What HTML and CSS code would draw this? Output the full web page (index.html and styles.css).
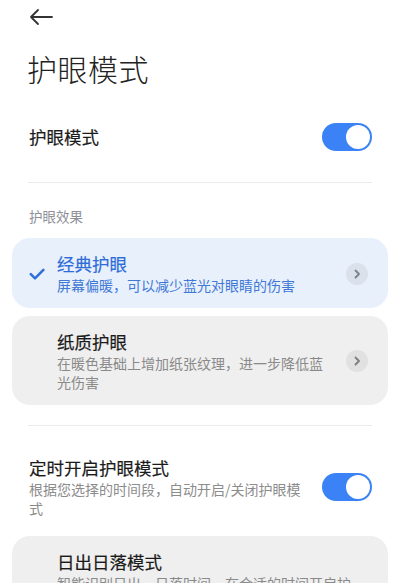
FILE: index.html
```html
<!DOCTYPE html>
<html lang="zh-CN">
<head>
    <meta charset="UTF-8">
    <meta name="viewport" content="width=device-width, initial-scale=1.0">
    <title>护眼模式</title>
    <link rel="stylesheet" href="styles.css">
</head>

<body>
    <div class="topbar">
        <svg class="back" width="26" height="18" viewBox="0 0 26 18">
            <path d="M24 9H3M10 2L3 9l7 7" fill="none" stroke="#333" stroke-width="1.8" stroke-linecap="round" stroke-linejoin="round"/>
        </svg>
    </div>

    <h1 class="page-title">护眼模式</h1>

    <div class="switch-row first">
        <div class="row-text">
            <div class="row-title">护眼模式</div>
        </div>
        <div class="toggle on"><span></span></div>
    </div>

    <div class="divider"></div>

    <div class="section-label">护眼效果</div>

    <div class="cards">
        <div class="card selected">
            <div class="check">
                <svg width="16" height="12" viewBox="0 0 16 12">
                    <path d="M1.8 6.2l4.2 4.2L14.4 1.8" fill="none" stroke="#2f6fdc" stroke-width="2.5" stroke-linecap="round" stroke-linejoin="round"/>
                </svg>
            </div>
            <div class="card-text">
                <div class="card-title">经典护眼</div>
                <div class="card-sub">屏幕偏暖，可以减少蓝光对眼睛的伤害</div>
            </div>
            <div class="more">
                <svg width="8" height="10" viewBox="0 0 8 10">
                    <path d="M2.5 1.5L6 5 2.5 8.5" fill="none" stroke="#7d8087" stroke-width="1.8" stroke-linecap="round" stroke-linejoin="round"/>
                </svg>
            </div>
        </div>

        <div class="card">
            <div class="check"></div>
            <div class="card-text">
                <div class="card-title">纸质护眼</div>
                <div class="card-sub">在暖色基础上增加纸张纹理，进一步降低蓝光伤害</div>
            </div>
            <div class="more">
                <svg width="8" height="10" viewBox="0 0 8 10">
                    <path d="M2.5 1.5L6 5 2.5 8.5" fill="none" stroke="#7d7d7d" stroke-width="1.8" stroke-linecap="round" stroke-linejoin="round"/>
                </svg>
            </div>
        </div>
    </div>

    <div class="divider second"></div>

    <div class="switch-row">
        <div class="row-text">
            <div class="row-title">定时开启护眼模式</div>
            <div class="row-sub">根据您选择的时间段，自动开启/关闭护眼模式</div>
        </div>
        <div class="toggle on"><span></span></div>
    </div>

    <div class="cards">
        <div class="card">
            <div class="check"></div>
            <div class="card-text">
                <div class="card-title">日出日落模式</div>
                <div class="card-sub">智能识别日出、日落时间，在合适的时间开启护眼模式</div>
            </div>
        </div>
    </div>
</body>

</html>
```

FILE: styles.css
```css
body {
    margin: 0;
    background: #fff;
    color: #1b1b1b;
    font-family: "Noto Sans CJK SC", "Noto Sans", sans-serif;
    overflow: hidden;
}

.topbar {
    height: 34px;
    padding-left: 28px;
    display: flex;
    align-items: center;
}

.back {
    display: block;
}

.page-title {
    margin: 14px 0 0 0;
    padding-left: 27px;
    font-size: 30px;
    line-height: 40px;
    font-weight: 300;
    color: #222;
    letter-spacing: 0.5px;
}

.switch-row {
    display: flex;
    align-items: center;
    padding: 30px 28px 18px 29px;
}

.switch-row.first {
    padding: 35px 28px 31px 29px;
}

.row-text {
    flex: 1;
    margin-right: 12px;
}

.row-title {
    font-size: 17.5px;
    line-height: 24px;
    -webkit-text-stroke: 0.2px currentColor;
}

.row-sub {
    font-size: 14px;
    line-height: 19px;
    color: #8c8c8c;
}

.toggle {
    width: 50px;
    height: 28px;
    border-radius: 14px;
    background: #ccc;
    position: relative;
    flex-shrink: 0;
}

.toggle.on {
    background: #3a82f6;
}

.toggle span {
    position: absolute;
    top: 2px;
    left: 2px;
    width: 24px;
    height: 24px;
    border-radius: 50%;
    background: #fff;
}

.toggle.on span {
    left: 24px;
}

.divider {
    height: 1px;
    margin: 0 28px;
    background: #ebebeb;
}

.divider.second {
    margin-top: 20px;
}

.section-label {
    margin: 23px 0 12px 0;
    padding-left: 29px;
    font-size: 13.5px;
    line-height: 20px;
    color: #8e9098;
}

.cards {
    display: flex;
    flex-direction: column;
    gap: 8px;
    padding: 0 12px;
}

.card {
    display: flex;
    align-items: center;
    padding: 14px 20px 13px 0;
    border-radius: 18px;
    background: #efefef;
}

.card.selected {
    background: #e8f0fc;
}

.check {
    width: 45px;
    flex-shrink: 0;
    display: flex;
    justify-content: flex-end;
}

.check svg {
    display: block;
    margin-right: 12px;
}

.card-text {
    flex: 1;
    margin-right: 16px;
}

.card-title {
    font-size: 17.5px;
    line-height: 24px;
    color: #1b1b1b;
    -webkit-text-stroke: 0.2px currentColor;
}

.card-sub {
    font-size: 14px;
    line-height: 19px;
    color: #8a8a8a;
}

.card.selected .card-title {
    color: #2e6cd8;
}

.card.selected .card-sub {
    color: #3f78d6;
}

.more {
    width: 22px;
    height: 22px;
    border-radius: 50%;
    background: #e1e1e1;
    flex-shrink: 0;
    display: flex;
    align-items: center;
    justify-content: center;
}

.card.selected .more {
    background: #dbe1ea;
}

.more svg {
    display: block;
}
```
